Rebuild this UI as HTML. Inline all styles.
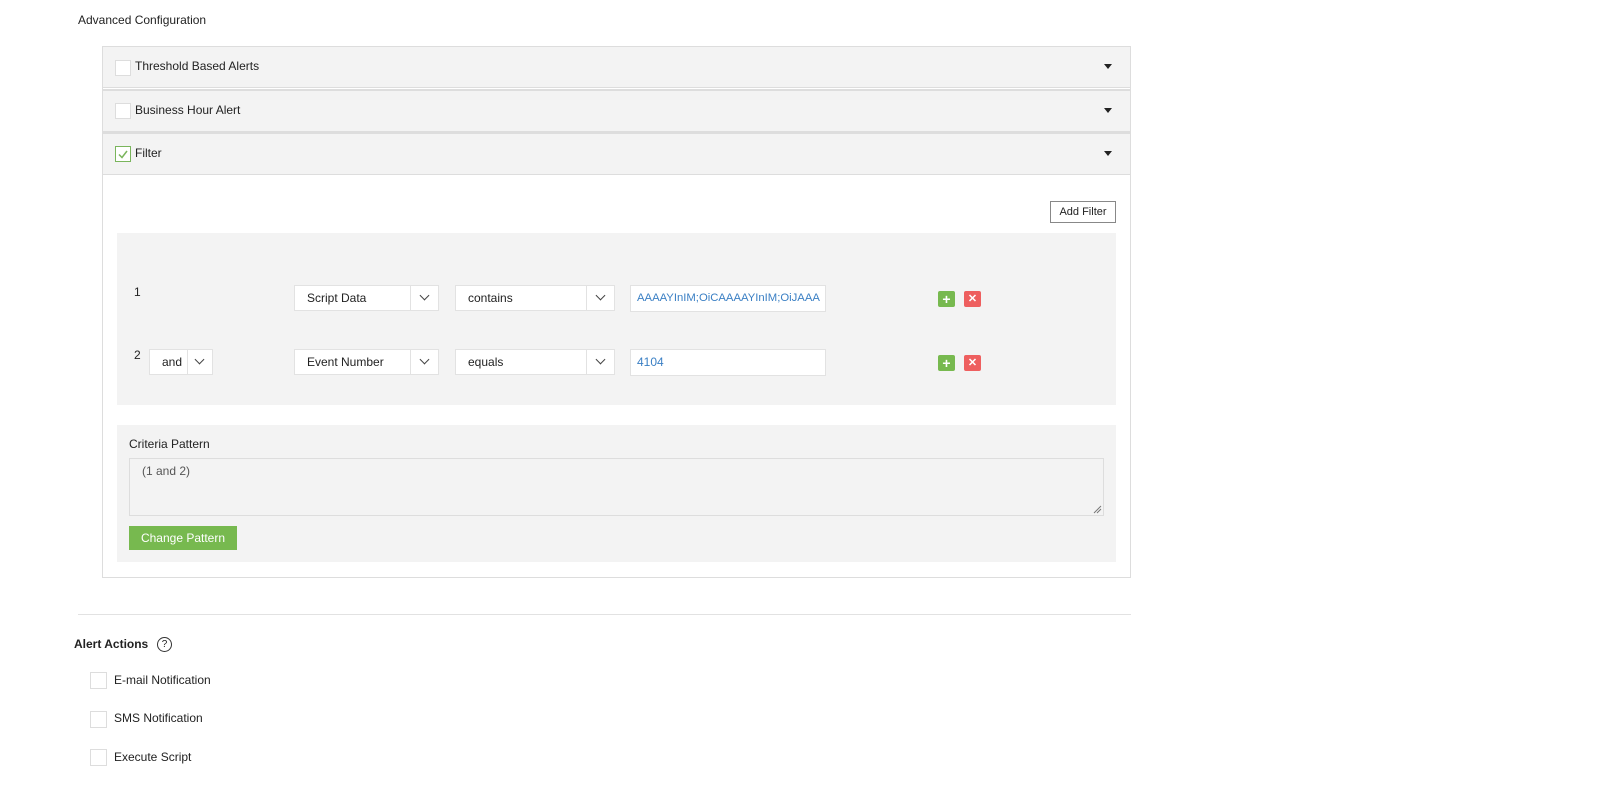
<!DOCTYPE html>
<html><head><style>
body{margin:0;width:1600px;height:787px;background:#fff;font-family:"Liberation Sans",sans-serif;font-size:12px;color:#222;position:relative;overflow:hidden}
.a{position:absolute}
.hd{position:absolute;left:102px;width:1029px;height:42px;background:#f3f3f3;border:1px solid #ddd;box-sizing:border-box}
.cb{position:absolute;width:16px;height:16px;background:#fff;border:1px solid #ddd;box-sizing:border-box}
.tri{position:absolute;right:18px;top:17px;width:0;height:0;border-left:4px solid transparent;border-right:4px solid transparent;border-top:5px solid #222}
.sel{position:absolute;height:26px;background:#fff;border:1px solid #e2e2e2;box-sizing:border-box;line-height:24px}
.sel .ar{position:absolute;right:0;top:0;bottom:0;border-left:1px solid #e2e2e2}
.chev{position:absolute;top:6px;left:50%;margin-left:-4px;width:6px;height:6px;border-right:1.6px solid #444;border-bottom:1.6px solid #444;transform:rotate(45deg)}
.inp{position:absolute;height:27px;background:#fff;border:1px solid #e2e2e2;box-sizing:border-box;line-height:25px;padding-left:6px;color:#3a7fc4;overflow:hidden;white-space:nowrap}
.ic{position:absolute;width:17px;height:16px;border-radius:2px;color:#fff;font-weight:bold;text-align:center;line-height:16px;font-size:14px}
</style></head><body>
<div class="a" style="left:78px;top:13px">Advanced Configuration</div>
<div class="a" style="left:102px;top:46px;width:1029px;height:532px;border:1px solid #ddd;box-sizing:border-box"></div>
<div class="hd" style="top:46px"><div class="cb" style="left:12px;top:13px"></div><div class="a" style="left:32px;top:12px">Threshold Based Alerts</div><div class="tri"></div></div>
<div class="hd" style="top:89px;border-top:2px solid #ddd;height:43px"><div class="cb" style="left:12px;top:12px"></div><div class="a" style="left:32px;top:12px">Business Hour Alert</div><div class="tri"></div></div>
<div class="hd" style="top:132px;border-top:2px solid #ddd;height:43px"><div class="cb" style="left:12px;top:12px;border-color:#7ab55c"><svg width="14" height="14" style="position:absolute;left:0;top:0"><path d="M3 7.5 L6 10.5 L11 4" stroke="#7ab55c" stroke-width="1.5" fill="none"/></svg></div><div class="a" style="left:32px;top:12px">Filter</div><div class="tri"></div></div>
<div class="a" style="left:1050px;top:201px;width:66px;height:22px;border:1px solid #888;box-sizing:border-box;text-align:center;line-height:20px;font-size:11px">Add Filter</div>
<div class="a" style="left:117px;top:233px;width:999px;height:172px;background:#f3f3f3"></div>
<div class="a" style="left:134px;top:285px">1</div>
<div class="a" style="left:134px;top:348px">2</div>
<div class="sel" style="left:149px;top:349px;width:64px"><span style="padding-left:12px">and</span><div class="ar" style="width:24px"><div class="chev"></div></div></div>
<div class="sel" style="left:294px;top:285px;width:145px"><span style="padding-left:12px">Script Data</span><div class="ar" style="width:27px"><div class="chev"></div></div></div>
<div class="sel" style="left:294px;top:349px;width:145px"><span style="padding-left:12px">Event Number</span><div class="ar" style="width:27px"><div class="chev"></div></div></div>
<div class="sel" style="left:455px;top:285px;width:160px"><span style="padding-left:12px">contains</span><div class="ar" style="width:27px"><div class="chev"></div></div></div>
<div class="sel" style="left:455px;top:349px;width:160px"><span style="padding-left:12px">equals</span><div class="ar" style="width:27px"><div class="chev"></div></div></div>
<div class="inp" style="left:630px;top:285px;width:196px;font-size:11.3px">AAAAYInIM;OiCAAAAYInIM;OiJAAA</div>
<div class="inp" style="left:630px;top:349px;width:196px">4104</div>
<div class="ic" style="left:938px;top:291px;background:#77b94f">+</div>
<div class="ic" style="left:964px;top:291px;background:#ee5f5f;font-size:11px">✕</div>
<div class="ic" style="left:938px;top:355px;background:#77b94f">+</div>
<div class="ic" style="left:964px;top:355px;background:#ee5f5f;font-size:11px">✕</div>
<div class="a" style="left:117px;top:425px;width:999px;height:137px;background:#f3f3f3"></div>
<div class="a" style="left:129px;top:437px">Criteria Pattern</div>
<div class="a" style="left:129px;top:458px;width:975px;height:58px;border:1px solid #ddd;box-sizing:border-box;background:#f3f3f3"><div class="a" style="left:12px;top:5px;color:#555">(1 and 2)</div>
<svg class="a" style="right:1px;bottom:1px" width="10" height="10"><path d="M2 9 L9 2 M5 9 L9 5" stroke="#777"/></svg></div>
<div class="a" style="left:129px;top:526px;width:108px;height:24px;background:#77b94f;color:#fff;text-align:center;line-height:24px">Change Pattern</div>
<div class="a" style="left:78px;top:614px;width:1053px;height:1px;background:#e2e2e2"></div>
<div class="a" style="left:74px;top:637px;font-weight:bold;font-size:12px">Alert Actions</div>
<div class="a" style="left:157px;top:637px;width:13px;height:13px;border:1.3px solid #333;border-radius:50%;font-size:10px;text-align:center;line-height:13px">?</div>
<div class="cb" style="left:90px;top:672px;width:17px;height:17px"></div><div class="a" style="left:114px;top:673px">E-mail Notification</div>
<div class="cb" style="left:90px;top:711px;width:17px;height:17px"></div><div class="a" style="left:114px;top:711px">SMS Notification</div>
<div class="cb" style="left:90px;top:749px;width:17px;height:17px"></div><div class="a" style="left:114px;top:750px">Execute Script</div>
</body></html>
